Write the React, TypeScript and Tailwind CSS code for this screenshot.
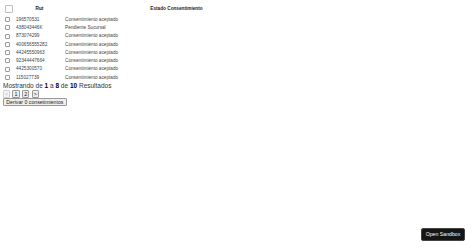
const rows = [
  { rut: "196570531", estado: "Consentimiento aceptado" },
  { rut: "438043446K", estado: "Pendiente Sucursal" },
  { rut: "873074299", estado: "Consentimiento aceptado" },
  { rut: "400656555282", estado: "Consentimiento aceptado" },
  { rut: "44245550963", estado: "Consentimiento aceptado" },
  { rut: "92344447664", estado: "Consentimiento aceptado" },
  { rut: "4425300570", estado: "Consentimiento aceptado" },
  { rut: "115027739", estado: "Consentimiento aceptado" },
];

function Box({ big }: { big?: boolean }) {
  return big ? (
    <span className="block h-[8px] w-[8px] rounded-[1px] border-[0.6px] border-[#bdbdbd] bg-white" />
  ) : (
    <span className="block h-[5px] w-[5px] rounded-[1px] border-[0.5px] border-[#9a9a9a] bg-white" />
  );
}

export default function App() {
  return (
    <div className="relative h-[248px] w-[474px] overflow-hidden bg-white font-['Liberation_Sans',Arial,sans-serif] leading-none text-black">
      <div className="px-[3px] pt-[3px]">
        <div className="grid w-[286px] grid-cols-[12px_49px_1fr] text-[4.7px] leading-[5.4px]">
          <div className="flex h-[12.4px] items-center pl-[2px]">
            <Box big />
          </div>
          <div className="flex h-[12.4px] items-center justify-center font-bold text-[#222]">Rut</div>
          <div className="flex h-[12.4px] items-center justify-center font-bold text-[#222]">Estado Consentimiento</div>
          {rows.map((r, idx) => (
            <div key={idx} className="contents">
              <div className="flex h-[8.25px] items-center pl-[2px]">
                <Box />
              </div>
              <div className="flex h-[8.25px] items-center pl-[1px] text-[#444]">{r.rut}</div>
              <div className="flex h-[8.25px] items-center pl-[1px] text-[#444]">{r.estado}</div>
            </div>
          ))}
        </div>
        <p className="mt-[0.5px] text-[6.5px] leading-[7.5px] text-[#333]">
          Mostrando de <b className="text-black">1</b> a <b className="text-black">8</b> de <b className="text-black">10</b> Resultados
        </p>
        <div className="mt-[0.5px] flex gap-[2.2px] text-[5.4px] leading-[6px]">
          <button className="h-[8px] w-[7px] rounded-[1px] border-[0.5px] border-[#d0d0d0] bg-[#f6f6f6] text-[#b0b0b0]">&lt;</button>
          <button className="h-[8px] w-[7.5px] rounded-[1px] border-[0.5px] border-[#999] bg-[#efefef] text-[#222]">1</button>
          <button className="h-[8px] w-[7.5px] rounded-[1px] border-[0.5px] border-[#999] bg-[#efefef] text-[#222]">2</button>
          <button className="h-[8px] w-[7.5px] rounded-[1px] border-[0.5px] border-[#999] bg-[#efefef] text-[#222]">&gt;</button>
        </div>
        <button className="mt-[0.5px] block h-[8px] rounded-[1px] border-[0.5px] border-[#999] bg-[#efefef] px-[2.3px] text-[5.2px] leading-[6px] text-[#222]">
          Derivar 0 consetimientos
        </button>
      </div>
      <button className="absolute bottom-[7px] right-[9px] h-[13px] w-[44px] rounded-[2px] border-[0.5px] border-[#444] bg-[#151515] text-[5.2px] text-white">
        Open Sandbox
      </button>
    </div>
  );
}
